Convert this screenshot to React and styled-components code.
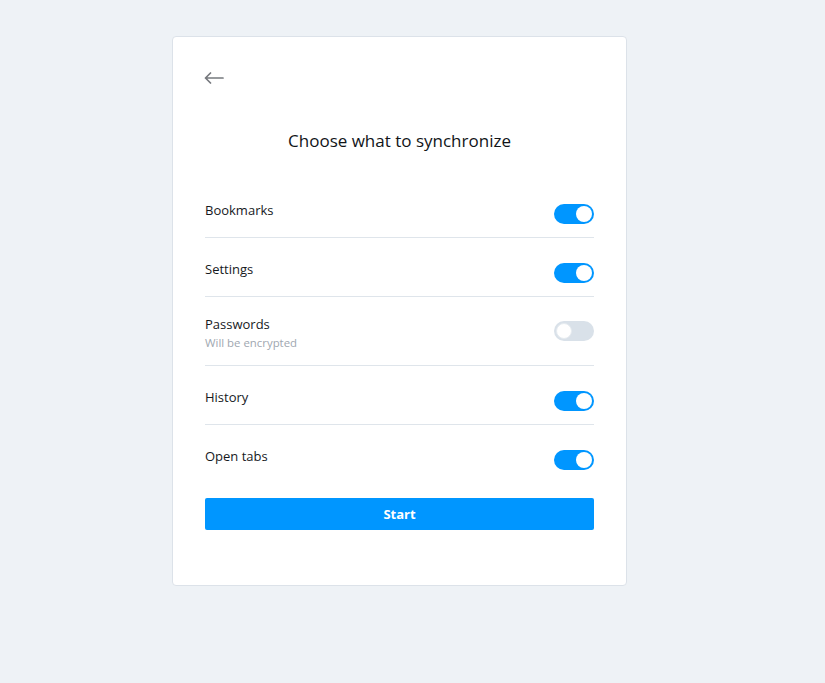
import React, { useState } from "react";
import styled, { createGlobalStyle } from "styled-components";

const GlobalStyle = createGlobalStyle`
  html, body {
    margin: 0;
    padding: 0;
    background: #eef2f6;
    font-family: "Open Sans", "Noto Sans", sans-serif;
    color: #1b1f24;
  }
`;

const Page = styled.div`
  display: flex;
  justify-content: center;
  padding-top: 36px;
  padding-right: 26px;
  min-height: 683px;
  box-sizing: border-box;
`;

const Card = styled.div`
  width: 455px;
  height: 550px;
  box-sizing: border-box;
  background: #ffffff;
  border: 1px solid #dce2e9;
  border-radius: 4px;
  padding: 35px 32px 0 32px;
  display: flex;
  flex-direction: column;
`;

const BackBtn = styled.button`
  display: flex;
  align-items: center;
  width: 20px;
  height: 12px;
  margin-left: -1px;
  padding: 0;
  border: none;
  background: none;
  cursor: pointer;
  color: #76797e;
`;

const Title = styled.h1`
  margin: 45px 0 26px 0;
  font-size: 17px;
  line-height: 24px;
  font-weight: 400;
  text-align: center;
  color: #111418;
`;

const List = styled.div`
  display: flex;
  flex-direction: column;
`;

const Row = styled.div`
  display: flex;
  justify-content: space-between;
  align-items: flex-start;
  padding: ${(p) => (p.$sub ? "17px 0 13px" : "21px 0 13px")};
  border-bottom: ${(p) => (p.$last ? "none" : "1px solid #dfe5eb")};
`;

const TextBlock = styled.div`
  display: flex;
  flex-direction: column;
`;

const Label = styled.span`
  font-size: 13px;
  line-height: 20px;
  color: #16191d;
`;

const Sub = styled.span`
  font-size: 11.4px;
  line-height: 18px;
  color: #a0a7b0;
`;

const Switch = styled.button`
  position: relative;
  flex: none;
  width: 40px;
  height: 20px;
  margin-top: ${(p) => (p.$sub ? "7px" : "4px")};
  padding: 0;
  border: none;
  border-radius: 10px;
  background: ${(p) => (p.$on ? "#0096ff" : "#d9e1e9")};
  cursor: pointer;

  &::after {
    content: "";
    position: absolute;
    top: 2px;
    left: ${(p) => (p.$on ? "22px" : "2px")};
    width: 16px;
    height: 16px;
    box-sizing: border-box;
    border-radius: 50%;
    background: #ffffff;
    border: ${(p) => (p.$on ? "none" : "1px solid #e6ebf0")};
  }
`;

const StartBtn = styled.button`
  margin-top: 15px;
  height: 32px;
  border: none;
  border-radius: 2px;
  background: #0096ff;
  color: #ffffff;
  font-family: "Open Sans", "Noto Sans", sans-serif;
  font-size: 13px;
  font-weight: 700;
  cursor: pointer;
`;

const items = [
  { id: "bookmarks", label: "Bookmarks", on: true },
  { id: "settings", label: "Settings", on: true },
  { id: "passwords", label: "Passwords", sub: "Will be encrypted", on: false },
  { id: "history", label: "History", on: true },
  { id: "tabs", label: "Open tabs", on: true },
];

function App() {
  const [state, setState] = useState(
    items.reduce((acc, el) => ({ ...acc, [el.id]: el.on }), {})
  );

  const toggle = (id) => {
    setState({ ...state, [id]: !state[id] });
  };

  return (
    <>
      <GlobalStyle />
      <Page>
        <Card>
          <BackBtn aria-label="Back">
            <svg width="20" height="12" viewBox="0 0 20 12" fill="none">
              <path
                d="M1.5 6H19M6.5 1L1.5 6L6.5 11"
                stroke="currentColor"
                strokeWidth="1.7"
                strokeLinecap="round"
                strokeLinejoin="round"
              />
            </svg>
          </BackBtn>
          <Title>Choose what to synchronize</Title>
          <List>
            {items.map((el, idx) => (
              <Row key={el.id} $sub={!!el.sub} $last={idx === items.length - 1}>
                <TextBlock>
                  <Label>{el.label}</Label>
                  {el.sub && <Sub>{el.sub}</Sub>}
                </TextBlock>
                <Switch
                  $on={state[el.id]}
                  $sub={!!el.sub}
                  onClick={() => toggle(el.id)}
                />
              </Row>
            ))}
          </List>
          <StartBtn>Start</StartBtn>
        </Card>
      </Page>
    </>
  );
}

export default App;
